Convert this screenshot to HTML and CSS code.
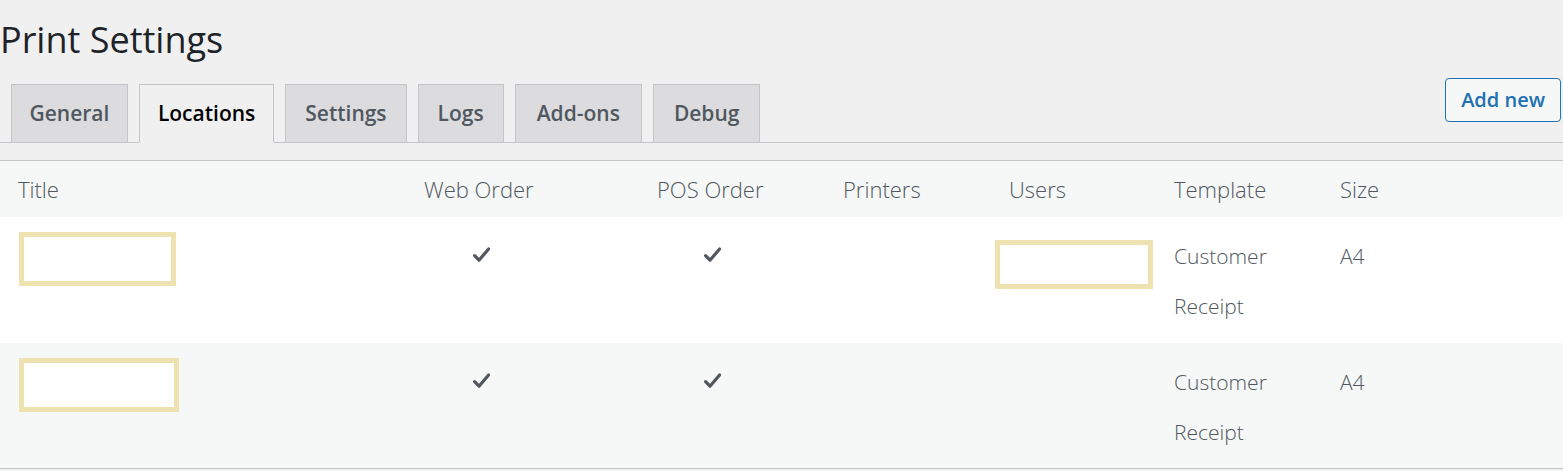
FILE: index.html
```html
<!DOCTYPE html>
<html>
<head>
<meta charset="utf-8">
<link rel="stylesheet" href="styles.css">
</head>
<body>
<div class="wrap">
  <h1 class="page-title">Print Settings</h1>
  <div class="nav-row">
    <nav class="tabs">
      <a class="tab tab-general">General</a>
      <a class="tab active">Locations</a>
      <a class="tab tab-settings">Settings</a>
      <a class="tab tab-logs">Logs</a>
      <a class="tab tab-addons">Add-ons</a>
      <a class="tab tab-debug">Debug</a>
    </nav>
    <a class="add-new">Add new</a>
  </div>

  <div class="table">
    <div class="row head">
      <div class="cell">Title</div>
      <div class="cell">Web Order</div>
      <div class="cell">POS Order</div>
      <div class="cell">Printers</div>
      <div class="cell">Users</div>
      <div class="cell">Template</div>
      <div class="cell">Size</div>
    </div>
    <div class="row body">
      <div class="cell"><div class="redact redact-title"></div></div>
      <div class="cell check-cell web"><svg class="check" viewBox="0 0 17 16"><path d="M1.6 8.6 L6 13.2 L15.6 2" fill="none" stroke="currentColor" stroke-width="3.2" stroke-linejoin="round" stroke-linecap="round"/></svg></div>
      <div class="cell check-cell pos"><svg class="check" viewBox="0 0 17 16"><path d="M1.6 8.6 L6 13.2 L15.6 2" fill="none" stroke="currentColor" stroke-width="3.2" stroke-linejoin="round" stroke-linecap="round"/></svg></div>
      <div class="cell"></div>
      <div class="cell"><div class="redact redact-users"></div></div>
      <div class="cell text">Customer<br>Receipt</div>
      <div class="cell text">A4</div>
    </div>
    <div class="row body alt">
      <div class="cell"><div class="redact redact-title2"></div></div>
      <div class="cell check-cell web"><svg class="check" viewBox="0 0 17 16"><path d="M1.6 8.6 L6 13.2 L15.6 2" fill="none" stroke="currentColor" stroke-width="3.2" stroke-linejoin="round" stroke-linecap="round"/></svg></div>
      <div class="cell check-cell pos"><svg class="check" viewBox="0 0 17 16"><path d="M1.6 8.6 L6 13.2 L15.6 2" fill="none" stroke="currentColor" stroke-width="3.2" stroke-linejoin="round" stroke-linecap="round"/></svg></div>
      <div class="cell"></div>
      <div class="cell"></div>
      <div class="cell text">Customer<br>Receipt</div>
      <div class="cell text">A4</div>
    </div>
  </div>
</div>
</body>
</html>
```

FILE: styles.css
```css
html, body {
  margin: 0;
  padding: 0;
  background: #f0f0f1;
}
body {
  font-family: "Open Sans", "Noto Sans", sans-serif;
  color: #1d2327;
  width: 1563px;
  height: 471px;
  overflow: hidden;
}
.wrap {
  display: flex;
  flex-direction: column;
}
.page-title {
  margin: 0;
  padding: 17px 0 0 0;
  font-size: 36px;
  font-weight: 400;
  line-height: 46px;
  color: #1d2327;
}
.nav-row {
  display: flex;
  align-items: flex-end;
  justify-content: space-between;
  margin-top: 15px;
  border-bottom: 1px solid #c3c4c7;
}
.tabs {
  display: flex;
  gap: 11px;
  padding-left: 11px;
}
.tab {
  display: block;
  box-sizing: border-box;
  height: 59px;
  margin-bottom: -1px;
  padding: 0 18px;
  border: 1px solid #c3c4c7;
  background: #dcdcde;
  color: #50575e;
  font-size: 21px;
  font-weight: 600;
  line-height: 57px;
}
.tab-general { padding: 0 17.5px; }
.tab-settings { padding: 0 19px; }
.tab-logs { padding: 0 19px; }
.tab-addons { padding: 0 21px; }
.tab-debug { padding: 0 20px; }
.tab.active {
  background: #f0f0f1;
  border-bottom-color: #f0f0f1;
  color: #000;
}
.add-new {
  box-sizing: border-box;
  height: 44px;
  margin: 0 2px 20px 0;
  padding: 0 15px;
  border: 1px solid #2271b1;
  border-radius: 4px;
  background: #f6f7f7;
  color: #2271b1;
  font-size: 20px;
  font-weight: 600;
  line-height: 42px;
}
.table {
  margin-top: 17px;
  border-top: 1px solid #c3c4c7;
  border-bottom: 1px solid #c3c4c7;
}
.row {
  display: grid;
  grid-template-columns: 406px 233px 186px 166px 165px 166px 1fr;
}
.head {
  height: 56px;
  background: #f6f7f7;
}
.head .cell {
  padding-left: 18px;
  font-size: 22px;
  font-weight: 300;
  line-height: 56px;
  color: #50575e;
}
.body {
  background: #fff;
  height: 126px;
}
.body.alt {
  background: #f6f7f7;
  height: 125px;
}
.body .cell {
  padding: 14px 0 0 18px;
  font-size: 21px;
  font-weight: 300;
  line-height: 50px;
  color: #50575e;
}
.check-cell {
  display: flex;
  align-items: flex-start;
}
.check-cell.web { padding-left: 67px; }
.check-cell.pos { padding-left: 65px; }
.check {
  width: 17px;
  height: 16px;
  margin-top: 16px;
  color: #50575e;
}
.redact {
  box-sizing: border-box;
  border: 5px solid #eee3b0;
  background: #fff;
}
.redact-title {
  width: 157px;
  height: 54px;
  margin: 1px 0 0 1px;
}
.redact-title2 {
  width: 160px;
  height: 54px;
  margin: 1px 0 0 1px;
}
.redact-users {
  width: 158px;
  height: 49px;
  margin: 9px 0 0 -14px;
}
```
